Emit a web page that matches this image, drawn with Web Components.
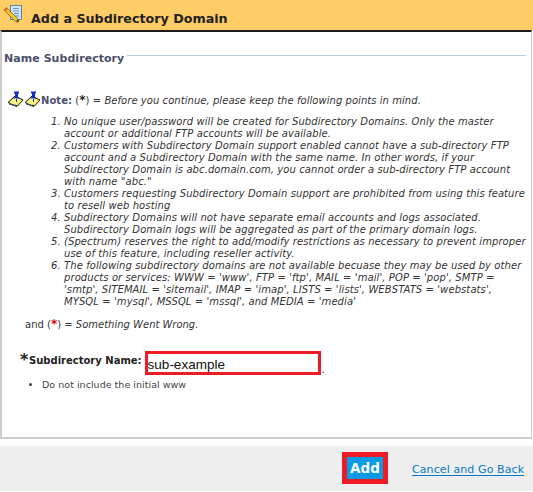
<!DOCTYPE html>
<html>
<head>
<meta charset="utf-8">
<title>Add a Subdirectory Domain</title>
<style>
  html, body { margin: 0; padding: 0; background: #fff; }
  body { font-family: "DejaVu Sans", Verdana, sans-serif; font-size: 10px; color: #333; }
</style>
</head>
<body>
<domain-page>
  <title-bar slot="head">Add a Subdirectory Domain</title-bar>
  <section-legend>Name Subdirectory</section-legend>
  <note-block>
    <li>No unique user/password will be created for Subdirectory Domains. Only the master<br>account or additional FTP accounts will be available.</li>
    <li>Customers with Subdirectory Domain support enabled cannot have a sub-directory FTP<br>account and a Subdirectory Domain with the same name. In other words, if your<br>Subdirectory Domain is abc.domain.com, you cannot order a sub-directory FTP account<br>with name "abc."</li>
    <li>Customers requesting Subdirectory Domain support are prohibited from using this feature<br>to resell web hosting</li>
    <li>Subdirectory Domains will not have separate email accounts and logs associated.<br>Subdirectory Domain logs will be aggregated as part of the primary domain logs.</li>
    <li>(Spectrum) reserves the right to add/modify restrictions as necessary to prevent improper<br>use of this feature, including reseller activity.</li>
    <li>The following subdirectory domains are not available becuase they may be used by other<br>products or services: WWW = 'www', FTP = 'ftp', MAIL = 'mail', POP = 'pop', SMTP =<br>'smtp', SITEMAIL = 'sitemail', IMAP = 'imap', LISTS = 'lists', WEBSTATS = 'webstats',<br>MYSQL = 'mysql', MSSQL = 'mssql', and MEDIA = 'media'</li>
  </note-block>
  <name-field></name-field>
  <action-bar></action-bar>
</domain-page>

<script>
class DomainPage extends HTMLElement {
  constructor() {
    super();
    this.attachShadow({ mode: "open" });
    this.shadowRoot.innerHTML = `
      <style>
        :host { display:flex; flex-direction:column; width:533px; height:492px; overflow:hidden; }
        .head { flex:none; }
        .panel {
          flex:none; height:409px; box-sizing:border-box; margin-right:1px;
          border:2px solid #ccc; border-width:2px 1px 2px 2px; border-top-color:#1a1a1a;
          padding-left:2px;
        }
        .foot { flex:none; margin-top:7px; }
      </style>
      <div class="head"><slot name="head"></slot></div>
      <div class="panel"><slot></slot></div>
      <div class="foot"><slot name="foot"></slot></div>`;
  }
  connectedCallback() {
    const bar = this.querySelector("action-bar");
    if (bar) bar.slot = "foot";
  }
}

class TitleBar extends HTMLElement {
  constructor() {
    super();
    this.attachShadow({ mode: "open" });
    this.shadowRoot.innerHTML = `
      <style>
        :host { display:block; height:30px; background:#fc6; position:relative; }
        .bar { display:flex; align-items:flex-end; height:100%; box-sizing:border-box; padding:0 0 4px 31px;
          font:bold 12.7px "DejaVu Sans", Verdana, sans-serif; color:#222; }
        svg { position:absolute; left:3px; top:4px; }
      </style>
      <svg width="20" height="20" viewBox="0 0 20 20">
        <path d="M7.500 1.500h11v14h-11z" fill="#d5e4f7" stroke="#4f86c6"/>
        <path d="M10 4.500h6M10 7h6M11 9.500h5M12 12h4" stroke="#5d93cf"/>
        <path d="M1 6l2.500-2.500L15 15l.5 3-3-.5z" fill="#f6c51c" stroke="#7a5a10" stroke-width=".7"/>
        <path d="M1 6l2.500-2.500L5 5 2.500 7.500z" fill="#e8703a"/>
        <path d="M13 17.300l2.300-2.300.3 3z" fill="#333"/>
      </svg>
      <div class="bar"><slot></slot></div>`;
  }
}

class SectionLegend extends HTMLElement {
  constructor() {
    super();
    this.attachShadow({ mode: "open" });
    this.shadowRoot.innerHTML = `
      <style>
        :host { display:flex; align-items:center; padding-top:19px; margin-right:5px; height:14px; }
        b { font:bold 11px "DejaVu Sans", Verdana, sans-serif; color:#4c4f6b; white-space:nowrap; letter-spacing:.05px; }
        i { flex:1; height:1px; margin:-5px 0 0 3px; background:#b5cde0; }
      </style>
      <b><slot></slot></b><i></i>`;
  }
}

class NoteBlock extends HTMLElement {
  constructor() {
    super();
    this.attachShadow({ mode: "open" });
    const pin = `<svg width="17" height="16" viewBox="0 0 17 16">
      <path d="M1 11.500L8 5l8 4-5.500 6z" fill="#f7f25c" stroke="#111" stroke-width="1"/>
      <path d="M3 11.500l5 2M5 9.500l5 2M7 7.500l5 2" stroke="#fff" stroke-width=".8"/>
      <path d="M2 13l8 2.500" stroke="#111" stroke-width=".8"/>
      <path d="M7 0.500h5v1.500l-1 1v3l2 1.500H6l2-1.500V3L7 2zM9 8h1v3H9z" fill="#1530c8"/>
    </svg>`;
    this.shadowRoot.innerHTML = `
      <style>
        :host { display:block; padding-top:22px; font:10px "DejaVu Sans", Verdana, sans-serif; color:#333; }
        .intro { display:flex; align-items:flex-end; padding-left:3px; height:20px; white-space:nowrap; }
        .intro svg { flex:none; margin-right:0; }
        .txt { margin-left:0; line-height:13px; letter-spacing:.05px; }
        .txt b { color:#4c4f6b; }
        .star { font-weight:bold; color:#222; font-size:12px; line-height:10px; }
        .red { font-weight:bold; color:#d00; font-size:12px; line-height:10px; }
        ol { margin:9px 0 0; padding:0 0 0 60px; line-height:12px; white-space:nowrap; letter-spacing:.09px; }
        ::slotted(li) { margin:0; font-style:italic; }
        .and { margin:10px 0 0 21px; line-height:13px; }
      </style>
      <div class="intro">${pin}${pin}<span class="txt"><b>Note:</b> (<span class="star">*</span>) = <em>Before you continue, please keep the following points in mind.</em></span></div>
      <ol><slot></slot></ol>
      <div class="and">and (<span class="red">*</span>) = <em>Something Went Wrong.</em></div>`;
  }
}

class NameField extends HTMLElement {
  constructor() {
    super();
    this.attachShadow({ mode: "open" });
    this.shadowRoot.innerHTML = `
      <style>
        :host { display:block; padding:20px 0 0 16px; font:10px "DejaVu Sans", Verdana, sans-serif; color:#222; }
        .row { display:flex; align-items:flex-start; }
        .ast { font:bold 16px/18px "DejaVu Sans", Verdana, sans-serif; color:#222; width:9px; }
        label { font-weight:bold; margin:4px 0 0 0; }
        input { box-sizing:border-box; width:176px; height:24px; margin:0 0 0 3px; padding:3px 0 0 0;
          border:3px solid #ed1c24; outline:none; background:#fff;
          font:13.500px "Liberation Sans", Arial, sans-serif; color:#111; }
        .dot { align-self:flex-end; margin-left:1px; }
        ul { margin:4px 0 0; padding:0 0 0 22px; font-size:9.500px; color:#444; letter-spacing:.03px; }
      </style>
      <div class="row"><span class="ast">*</span><label>Subdirectory Name:</label><input value="sub-example"><span class="dot">.</span></div>
      <ul><li>Do not include the initial www</li></ul>`;
  }
}

class ActionBar extends HTMLElement {
  constructor() {
    super();
    this.attachShadow({ mode: "open" });
    this.shadowRoot.innerHTML = `
      <style>
        :host { display:flex; align-items:flex-start; height:45px; background:#eee; padding:6px 0 0 342px; box-sizing:border-box; font-family:"DejaVu Sans", Verdana, sans-serif; }
        button { box-sizing:border-box; width:46px; height:32px; border:5px solid #ed1c24; background:#0a9be6; color:#fff;
          font:bold 13.500px "DejaVu Sans", Verdana, sans-serif; padding:0; }
        a { margin:11px 0 0 24px; font-size:11px; letter-spacing:.1px; color:#0a78c2; text-decoration:underline; text-underline-offset:2px; white-space:nowrap; }
      </style>
      <button>Add</button><a href="#">Cancel and Go Back</a>`;
  }
}

customElements.define("domain-page", DomainPage);
customElements.define("title-bar", TitleBar);
customElements.define("section-legend", SectionLegend);
customElements.define("note-block", NoteBlock);
customElements.define("name-field", NameField);
customElements.define("action-bar", ActionBar);
</script>
</body>
</html>
